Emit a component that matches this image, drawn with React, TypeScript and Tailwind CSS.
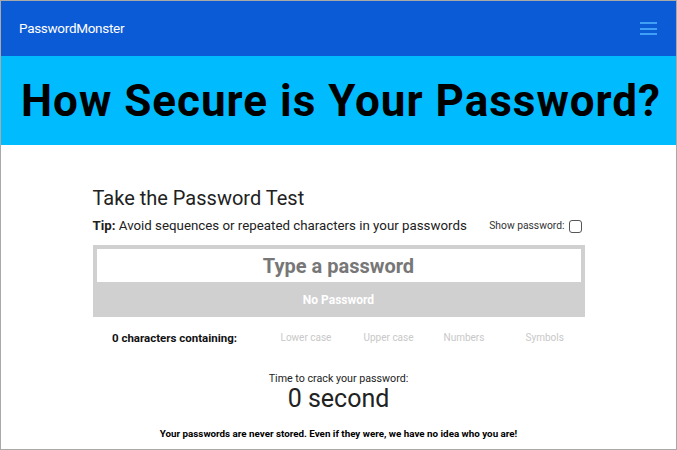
import React, { useState } from 'react';

const App: React.FC = () => {
  const [password, setPassword] = useState('');
  const [show, setShow] = useState(false);

  return (
    <div className="w-[677px] h-[450px] overflow-hidden border border-[#a9a9a9] bg-white font-['Roboto',sans-serif] text-[#212121]">
      {/* top nav */}
      <div className="flex h-[55px] items-center justify-between bg-[#0b5ad6] pl-[18px] pr-[19px]">
        <span className="text-[13.5px] tracking-[-0.3px] text-white">PasswordMonster</span>
        <div className="flex flex-col gap-[3.5px]">
          <span className="block h-[2px] w-[17px] bg-[#3fa0f5]" />
          <span className="block h-[2px] w-[17px] bg-[#3fa0f5]" />
          <span className="block h-[2px] w-[17px] bg-[#3fa0f5]" />
        </div>
      </div>

      {/* hero */}
      <div className="flex h-[89px] items-center justify-center bg-[#00bbfe] pl-[5px]">
        <h1 className="whitespace-nowrap text-[44px] font-bold leading-none tracking-[1px] text-black">
          How Secure is Your Password?
        </h1>
      </div>

      {/* test area */}
      <div className="mx-auto w-[492px] pt-[40px]">
        <h2 className="text-[20px] leading-[26px] text-[#222]">Take the Password Test</h2>
        <div className="mt-[5px] flex items-center justify-between">
          <p className="whitespace-nowrap text-[13.3px] leading-[20px]">
            <span className="font-bold">Tip:</span> Avoid sequences or repeated characters in your passwords
          </p>
          <label className="flex items-center gap-[4px] whitespace-nowrap pr-[3px] text-[10.3px] text-[#333]">
            Show password:
            <input
              type="checkbox"
              checked={show}
              onChange={(e) => setShow(e.target.checked)}
              className="h-[13px] w-[13px] appearance-none rounded-[3px] border border-[#555] bg-white"
            />
          </label>
        </div>

        <div className="mt-[9px] bg-[#d0d0d0] px-[4px] pt-[4px]">
          <input
            type={show ? 'text' : 'password'}
            value={password}
            onChange={(e) => setPassword(e.target.value)}
            placeholder="Type a password"
            className="block h-[33px] w-full bg-white text-center text-[20px] font-bold text-[#333] outline-none placeholder:text-[#777]"
          />
          <div className="flex h-[35px] items-center justify-center text-[12px] font-bold text-white">
            No Password
          </div>
        </div>

        <div className="mt-[13px] flex items-center text-[10px] leading-[16px]">
          <div className="w-[164px] whitespace-nowrap text-center text-[11.5px] font-bold text-[#111]">
            {password.length} characters containing:
          </div>
          <div className="w-[82px] whitespace-nowrap pl-[24px] text-[#c8c8c8]">Lower case</div>
          <div className="w-[82px] whitespace-nowrap pl-[25px] text-[#c8c8c8]">Upper case</div>
          <div className="w-[82px] whitespace-nowrap pl-[23px] text-[#c8c8c8]">Numbers</div>
          <div className="w-[82px] whitespace-nowrap pl-[23px] text-[#c8c8c8]">Symbols</div>
        </div>

        <div className="mt-[27px] flex flex-col items-center">
          <div className="text-[10.7px] leading-[12px] text-[#222]">Time to crack your password:</div>
          <div className="text-[25px] leading-[28px] text-[#222]">0 second</div>
        </div>

        <p className="mt-[14px] whitespace-nowrap text-center text-[9.8px] leading-[14px] font-bold text-black">
          Your passwords are never stored. Even if they were, we have no idea who you are!
        </p>
      </div>
    </div>
  );
};

export default App;
